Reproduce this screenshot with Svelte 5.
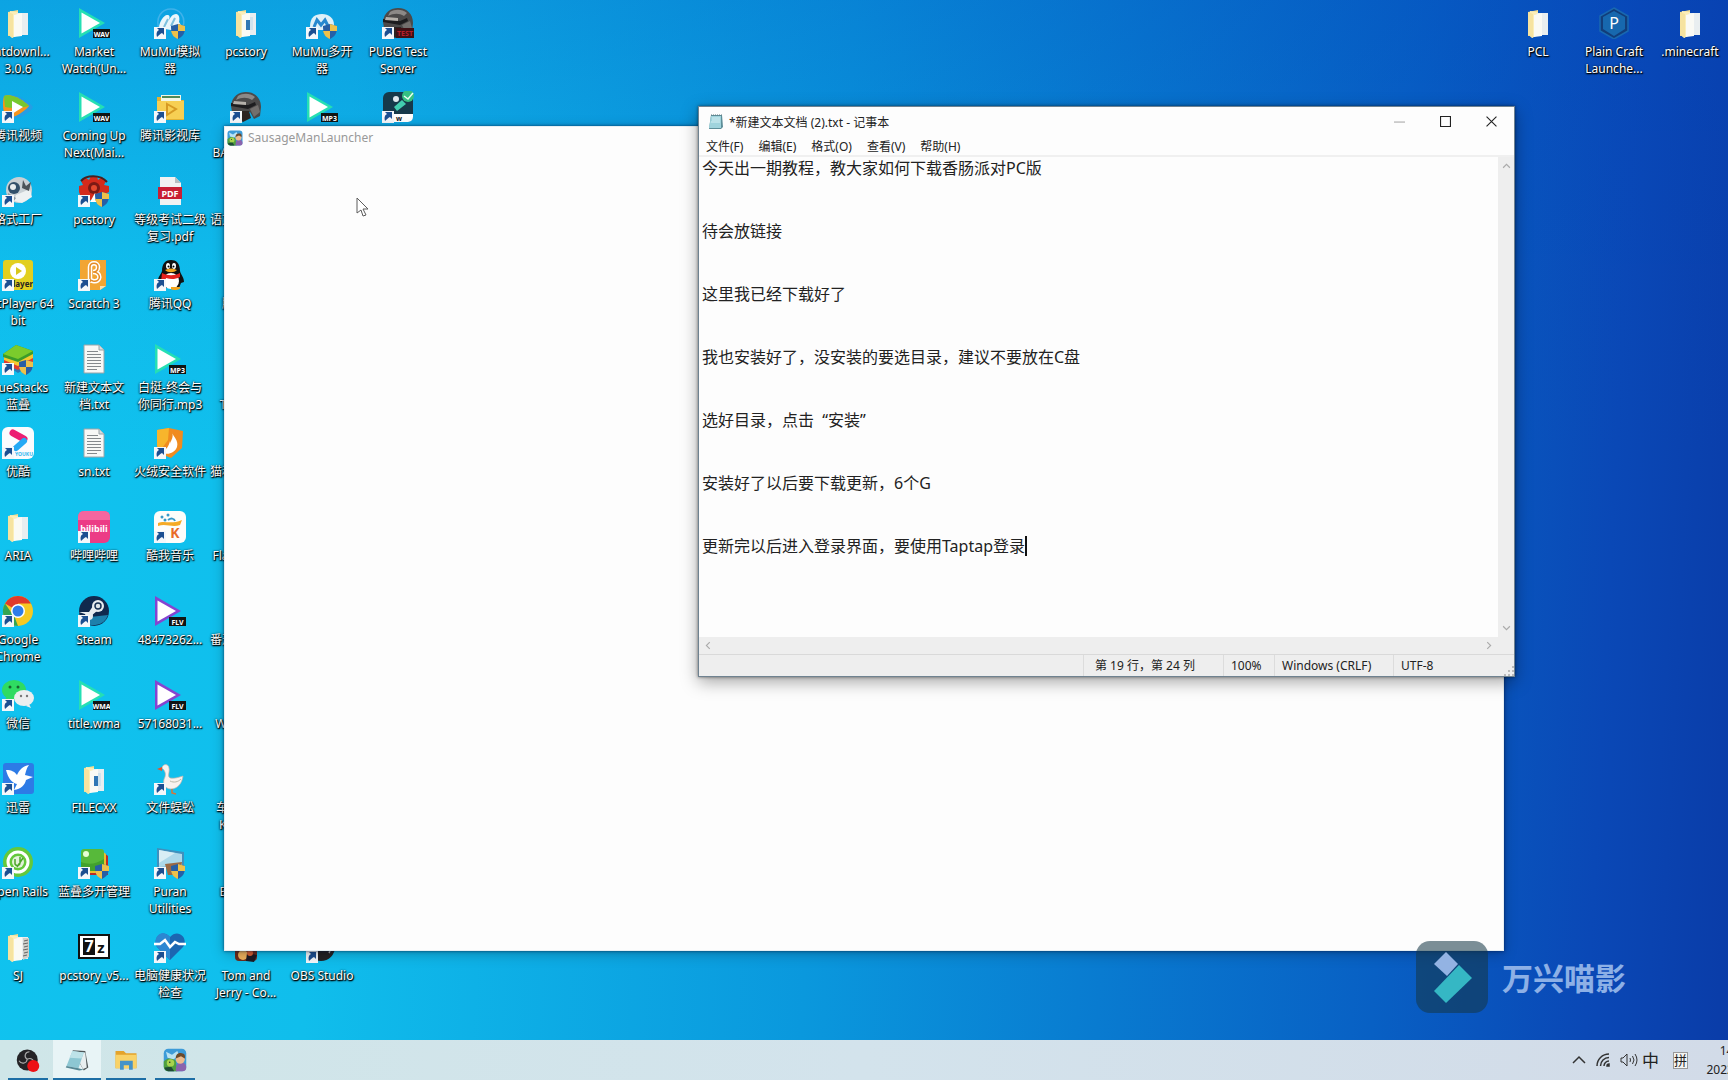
<script>
  import { onMount } from 'svelte';

  const shortcuts = [
    { col: 1, row: 1, icon: 'folder', label: 'Antdownl...\n3.0.6' },
    { col: 1, row: 2, icon: 'txvideo', label: '腾讯视频', link: true },
    { col: 1, row: 3, icon: 'factory', label: '格式工厂', link: true },
    { col: 1, row: 4, icon: 'potplayer', label: 'PotPlayer 64\nbit', link: true },
    { col: 1, row: 5, icon: 'bluestacks', label: 'BlueStacks\n蓝叠', link: true, shield: true },
    { col: 1, row: 6, icon: 'youku', label: '优酷', link: true },
    { col: 1, row: 7, icon: 'folder', label: 'ARIA' },
    { col: 1, row: 8, icon: 'chrome', label: 'Google\nChrome', link: true },
    { col: 1, row: 9, icon: 'wechat', label: '微信', link: true },
    { col: 1, row: 10, icon: 'xunlei', label: '迅雷', link: true },
    { col: 1, row: 11, icon: 'rails', label: 'Open Rails', link: true },
    { col: 1, row: 12, icon: 'folderfile', label: 'SJ' },

    { col: 2, row: 1, icon: 'media', tone: '#25dfb4', tag: 'WAV', label: 'Market\nWatch(Un...' },
    { col: 2, row: 2, icon: 'media', tone: '#25dfb4', tag: 'WAV', label: 'Coming Up\nNext(Mai...' },
    { col: 2, row: 3, icon: 'gear', label: 'pcstory', link: true, shield: true },
    { col: 2, row: 4, icon: 'scratch', label: 'Scratch 3', link: true },
    { col: 2, row: 5, icon: 'txt', label: '新建文本文\n档.txt' },
    { col: 2, row: 6, icon: 'txt', label: 'sn.txt' },
    { col: 2, row: 7, icon: 'bili', label: '哔哩哔哩', link: true },
    { col: 2, row: 8, icon: 'steam', label: 'Steam', link: true },
    { col: 2, row: 9, icon: 'media', tone: '#25dfb4', tag: 'WMA', label: 'title.wma' },
    { col: 2, row: 10, icon: 'folderblue', label: 'FILECXX' },
    { col: 2, row: 11, icon: 'greenbox', label: '蓝叠多开管理', link: true, shield: true },
    { col: 2, row: 12, icon: 'sevenzip', label: 'pcstory_v5...' },

    { col: 3, row: 1, icon: 'mumu', label: 'MuMu模拟\n器', link: true, shield: true },
    { col: 3, row: 2, icon: 'videofolder', label: '腾讯影视库', link: true },
    { col: 3, row: 3, icon: 'pdf', label: '等级考试二级\n复习.pdf' },
    { col: 3, row: 4, icon: 'qq', label: '腾讯QQ', link: true },
    { col: 3, row: 5, icon: 'media', tone: '#25dfb4', tag: 'MP3', label: '白挺-终会与\n你同行.mp3' },
    { col: 3, row: 6, icon: 'huorong', label: '火绒安全软件', link: true },
    { col: 3, row: 7, icon: 'kuwo', label: '酷我音乐', link: true },
    { col: 3, row: 8, icon: 'media', tone: '#8544d0', tag: 'FLV', label: '48473262...' },
    { col: 3, row: 9, icon: 'media', tone: '#8544d0', tag: 'FLV', label: '57168031...' },
    { col: 3, row: 10, icon: 'goose', label: '文件蜈蚣', link: true },
    { col: 3, row: 11, icon: 'puran', label: 'Puran\nUtilities', link: true, shield: true },
    { col: 3, row: 12, icon: 'heart', label: '电脑健康状况\n检查', link: true },

    { col: 4, row: 1, icon: 'folderblue', label: 'pcstory' },
    { col: 4, row: 2, icon: 'helmet', label: '\nBATTLEGR...', link: true },
    { col: 4, row: 3, icon: 'txt', label: '语文学习资料' },
    { col: 4, row: 4, icon: 'txt', label: '腾讯会议' },
    { col: 4, row: 5, icon: 'txt', label: '\nTeamTalk' },
    { col: 4, row: 6, icon: 'txt', label: '猫和老鼠手游' },
    { col: 4, row: 7, icon: 'txt', label: 'FlashCenter' },
    { col: 4, row: 8, icon: 'txt', label: '番茄小说阅读' },
    { col: 4, row: 9, icon: 'txt', label: 'Wallpaper..' },
    { col: 4, row: 10, icon: 'txt', label: '车机互联版\nKugou 22' },
    { col: 4, row: 11, icon: 'txt', label: 'EV Studio' },
    { col: 4, row: 12, icon: 'tom', label: 'Tom and\nJerry - Co...' },

    { col: 5, row: 1, icon: 'mumublue', label: 'MuMu多开\n器', link: true, shield: true },
    { col: 5, row: 2, icon: 'media', tone: '#25dfb4', tag: 'MP3', label: '' },
    { col: 5, row: 12, icon: 'obs', label: 'OBS Studio', link: true },

    { col: 6, row: 1, icon: 'helmettest', label: 'PUBG Test\nServer', link: true },
    { col: 6, row: 2, icon: 'filmora', label: '', link: true }
  ];

  const rightShortcuts = [
    { col: 1, row: 1, icon: 'folder', label: 'PCL' },
    { col: 2, row: 1, icon: 'pcl', label: 'Plain Craft\nLaunche...' },
    { col: 3, row: 1, icon: 'folder', label: '.minecraft' }
  ];

  const menus = ['文件(F)', '编辑(E)', '格式(O)', '查看(V)', '帮助(H)'];

  const tasks = [
    { icon: 'obsrec', name: 'OBS' },
    { icon: 'notepad', name: '记事本', active: true },
    { icon: 'explorer', name: '文件资源管理器' },
    { icon: 'sausage', name: 'SausageManLauncher' }
  ];

  const paragraphs = [
    '今天出一期教程，教大家如何下载香肠派对PC版',
    '待会放链接',
    '这里我已经下载好了',
    '我也安装好了，没安装的要选目录，建议不要放在C盘',
    '选好目录，点击  “安装”',
    '安装好了以后要下载更新，6个G',
    '更新完以后进入登录界面，要使用Taptap登录'
  ];
  const LINE = 21;

  let text = $state(paragraphs.join('\n\n\n'));
  let editor;
  let caretX = $state(0);
  let caretY = $derived((text.split('\n').length - 1) * LINE);

  function placeCaret() {
    const ctx = document.createElement('canvas').getContext('2d');
    ctx.font = getComputedStyle(editor).font;
    caretX = Math.round(ctx.measureText(text.split('\n').pop()).width);
  }

  onMount(placeCaret);
</script>

{#snippet folderBase()}
  <path d="M6 5l10-2v25l-10 1z" fill="#f3dc8d" />
  <path d="M8 4l8 1v23l-6 3-2-2z" fill="#fbeeb9" />
  <path d="M15 6h11v22H15z" fill="#e9eef0" />
  <path d="M12 8l8-2v23l-8 1z" fill="#fafaf5" />
  <path d="M6 5l5 2v24l-5-3z" fill="#f6e3a0" />
{/snippet}

{#snippet sausageArt()}
  <rect x="1" y="1" width="30" height="30" rx="6" fill="#3d9bd8" />
  <path d="M1 18c6-6 11-5 16-1l2 14H7a6 6 0 0 1-6-6z" fill="#4f9f3f" />
  <path d="M4 5l8 4 7-5 3 6-8 5-8-2z" fill="#b9e2f2" />
  <circle cx="10" cy="20" r="5" fill="#a8d34d" />
  <circle cx="9" cy="19" r="1" fill="#223" />
  <path d="M17 31c0-9 3-12 7-12 5 0 7 4 7 7a5 5 0 0 1-5 5z" fill="#8a63ad" />
  <circle cx="23" cy="15" r="6" fill="#edbb8e" />
  <path d="M17 14c0-6 4-8 8-7 4 0 5 4 4 7l-5-3z" fill="#6b4a2b" />
  <path d="M2 26l9-1 4 6H7a6 6 0 0 1-5-5z" fill="#1f4a35" />
{/snippet}

{#snippet helmetArt()}
  <path d="M1 15C2 5 9 1 16 1c9 0 15 6 15 15l-1 9-6 3-4-7H2z" fill="#4b4a4a" />
  <path d="M8 5c5-3 12-3 17 1l-3 3C17 6 12 6 6 9z" fill="#8c8987" />
  <path d="M1 12l17 2 7-3 1 3-8 4-17-3z" fill="#1d1d1f" />
  <path d="M4 10l12 1v3L3 13z" fill="#b4b0aa" />
  <path d="M6 20h13l2 7-8 4-7-5z" fill="#2c2421" />
  <path d="M20 18l8-4 2 7-6 5z" fill="#726f6d" />
{/snippet}

{#snippet glyph(name, tone, tag)}
  {#if name === 'folder'}
    {@render folderBase()}
  {:else if name === 'folderblue'}
    {@render folderBase()}
    <path d="M16 13h4v10h-4z" fill="#3177b5" />
    <path d="M20 10h3v13h-3z" fill="#cfe3ee" />
  {:else if name === 'folderfile'}
    {@render folderBase()}
    <path d="M21 7h6v19l-6 3z" fill="#cfcfca" />
    <path d="M22 10l4-1M21 13l5-1M22 16l4-1M21 19l5-1M22 22l4-1M21 25l4-1" stroke="#666" />
  {:else if name === 'media'}
    <path d="M1 1l26 15L1 31z" fill={tone} />
    <path d="M3.500 5.500L22 16 3.500 26.500z" fill="#fff" />
    <rect x="15" y="22" width="17" height="9" fill="#101414" />
    <text x="23.5" y="29.5" class="tag">{tag}</text>
  {:else if name === 'txt'}
    <path d="M6 2h15l5 5v23H6z" fill="#f8f8f6" stroke="#9aa4a8" />
    <path d="M21 2v5h5" fill="#d8dcde" stroke="#9aa4a8" />
    <path d="M9 8.500h11M9 11.500h14M9 14.500h14M9 17.500h14M9 20.500h14M9 23.500h14M9 26.500h10" stroke="#85898c" />
  {:else if name === 'mumu'}
    <path d="M5 22C1 10 8 2 17 2s15 8 12 18" fill="none" stroke="#3fb2ea" stroke-width="1.500" />
    <path d="M5 21c0-6 5-13 8-13s3 2 2 5c2-4 4-6 7-6s4 4 3 8l4 6-12 2z" fill="#eaf6fb" />
    <path d="M10 20l4-8M17 19l4-8" stroke="#7cc0de" stroke-width="2" />
  {:else if name === 'mumublue'}
    <path d="M4 20C4 10 9 7 16 7s12 4 12 11v5H4z" fill="#dff0f8" />
    <path d="M8 20l3-7 4 5 4-5 3 6" fill="none" stroke="#2788cf" stroke-width="3" />
  {:else if name === 'txvideo'}
    <path d="M3 5c8-4 24 4 28 11-3 7-18 14-26 12-3-5-4-16-2-23z" fill="#259ee4" />
    <path d="M2 5c7-3 19 4 25 10-5 6-16 13-23 12-3-6-4-15-2-22z" fill="#f7941d" />
    <path d="M2 5c7-3 19 4 25 10-7 2-16 3-24 1z" fill="#78c82d" />
    <path d="M10 10l11 6-11 7z" fill="#fff" />
  {:else if name === 'videofolder'}
    <path d="M3 6h10l3 3h14v20H3z" fill="#e3b233" />
    <path d="M7 4h20v6H7z" fill="#f3f6e6" /><path d="M8 5h18v2H8z" fill="#4f8a58" />
    <path d="M3 10h27v18H3z" fill="#f7cf53" />
    <path d="M13 13l9 5-9 6z" fill="none" stroke="#d79a23" stroke-width="2" />
  {:else if name === 'factory'}
    <circle cx="17" cy="15" r="13" fill="#c9d0d4" />
    <circle cx="12" cy="13" r="6" fill="#32506a" /><circle cx="11" cy="12" r="3" fill="#e9eef0" />
    <path d="M14 20l14-6 2 8-10 6-8-2z" fill="#eef1f2" />
    <path d="M21 5l3 6 5-4-2 9-7-3z" fill="#4b5358" />
    <path d="M6 18l8 5-3 4-6-3z" fill="#8b979e" />
  {:else if name === 'gear'}
    <path d="M13 1h6l1 4 4-3 4 4-2 4 5 1v6l-4 2-1 6H4L1 17v-6l4-1-2-4 4-4 4 3z" fill="#d42b1c" />
    <circle cx="16" cy="13" r="6" fill="#7c1a15" /><circle cx="16" cy="13" r="3" fill="#e5492e" />
    <path d="M12 27l5-9 4 9z" fill="#fff" />
    <path d="M3 6C8 0 22-1 29 7" stroke="#422" fill="none" stroke-width="2" />
  {:else if name === 'pdf'}
    <path d="M6 2h15l6 6v22H6z" fill="#f1f2f2" />
    <path d="M21 2v6h6z" fill="#b9bdc0" />
    <rect x="4" y="12" width="24" height="12" fill="#c81f34" />
    <text x="16" y="21.500" class="pdf">PDF</text>
  {:else if name === 'potplayer'}
    <rect x="1" y="1" width="30" height="30" rx="3" fill="#e2cf1f" />
    <circle cx="16" cy="12" r="8" fill="#fff" />
    <path d="M14 8l6 4-6 4z" fill="#d8c71b" />
    <text x="21" y="28" class="pot">layer</text>
  {:else if name === 'scratch'}
    <path d="M2 1h26v26l-6 4H2z" fill="#f2a533" /><path d="M22 31v-4h6z" fill="#fce0ac" />
    <path d="M12 23V8c0-5 8-5 8 0 0 3-2 5-5 5 9 0 8 11 0 9l-3-1" fill="none" stroke="#fff" stroke-width="4.500" />
    <path d="M12 23V8c0-5 8-5 8 0 0 3-2 5-5 5 9 0 8 11 0 9l-3-1" fill="none" stroke="#e58b25" stroke-width="1.500" />
  {:else if name === 'qq'}
    <path d="M4 22c0-5 3-6 4-10 0-8 4-11 9-11s9 3 9 11c1 4 4 6 4 11l-3 1-2 5H9l-3-6z" fill="#111" />
    <ellipse cx="17" cy="22" rx="8" ry="8" fill="#fff" />
    <ellipse cx="14" cy="7" rx="2" ry="3" fill="#fff" /><ellipse cx="20" cy="7" rx="2" ry="3" fill="#fff" />
    <circle cx="14.500" cy="7.500" r="1" /><circle cx="19.500" cy="7.500" r="1" />
    <path d="M11 11c4-2 8-2 12 0-3 3-9 3-12 0z" fill="#f3a51e" />
    <path d="M8 14c6 3 12 3 18 0v4c-6 3-10 2-14 1l-1 5-4-1z" fill="#e5221e" />
    <path d="M17 28h9c2 3-7 4-9 2z" fill="#f3a51e" />
  {:else if name === 'bluestacks'}
    <path d="M2 21l14-6 15 6-15 9z" fill="#2c79b7" />
    <path d="M2 17l14-6 15 4v4l-15 8-14-6z" fill="#e03d2f" />
    <path d="M2 14l14-6 15 3v4l-15 8-14-6z" fill="#f4c92f" />
    <path d="M1 11L14 2l17 6v3l-15 8-15-5z" fill="#3a9c2a" />
    <path d="M1 11L14 2l17 6-15 8z" fill="#7bcb2c" />
  {:else if name === 'youku'}
    <rect x="0" y="0" width="32" height="32" rx="6" fill="#fbfbfd" />
    <path d="M11 6l11 6" stroke="#ec1d72" stroke-width="7" stroke-linecap="round" />
    <path d="M22 14l-8 7" stroke="#24a9f5" stroke-width="6" stroke-linecap="round" />
    <text x="22" y="29" class="youku">YOUKU</text>
  {:else if name === 'chrome'}
    <circle cx="16" cy="16" r="15" fill="#f6c922" />
    <path d="M16 16L3 8.500A15 15 0 0 1 29 8.500H16z" fill="#df3a2c" />
    <path d="M3 8.500L13 23l3 8A15 15 0 0 1 3 8.500z" fill="#33a553" />
    <circle cx="16" cy="16" r="7" fill="#fff" /><circle cx="16" cy="16" r="5.500" fill="#2e7de9" />
  {:else if name === 'wechat'}
    <ellipse cx="12" cy="11" rx="12" ry="10" fill="#2fdb62" />
    <path d="M4 18l-1 6 6-3z" fill="#2fdb62" />
    <circle cx="8" cy="8" r="1.500" fill="#17642e" /><circle cx="16" cy="8" r="1.500" fill="#17642e" />
    <ellipse cx="22" cy="19" rx="10" ry="8" fill="#eceeef" /><path d="M27 25l2 4-5-2z" fill="#eceeef" />
    <circle cx="19" cy="17" r="1.200" fill="#777" /><circle cx="25" cy="17" r="1.200" fill="#777" />
  {:else if name === 'xunlei'}
    <rect x="1" y="0" width="31" height="31" rx="3" fill="#2d7be6" />
    <path d="M4 7c6 0 9 2 11 5 2-5 6-9 12-10-3 4-3 7-4 10l8 2-7 3c-1 5-5 9-12 10l3-6C10 20 6 15 4 7z" fill="#fff" />
  {:else if name === 'rails'}
    <circle cx="16" cy="15" r="15" fill="#64c83c" />
    <circle cx="16" cy="15" r="10" fill="none" stroke="#fff" stroke-width="3" />
    <circle cx="16" cy="15" r="6" fill="#e3f2da" />
    <path d="M13 12v5c2 3 5 1 5-1v-6M15 20l6-9" stroke="#4da52b" stroke-width="1.500" fill="none" />
  {:else if name === 'huorong'}
    <path d="M3 3l12-2 14 3-1 17-11 10C8 28 3 24 3 17z" fill="#f08b1f" />
    <path d="M3 3l12-2-1 12-8 11c-2-2-3-4-3-7z" fill="#f7b52c" />
    <path d="M18 5c1 5 7 8 5 15-2 6-9 8-14 6 5-2 7-5 7-9 1-4 4-7 2-12z" fill="#fff" />
    <path d="M8 25c4-2 7-6 8-11 2 6 0 11-5 13z" fill="#fff" />
  {:else if name === 'bili'}
    <rect x="0" y="0" width="32" height="32" rx="6" fill="#ec3c86" />
    <path d="M0 6q0-6 6-6h20q6 0 6 6v3H0z" fill="#f4669f" />
    <text x="16" y="21" class="bili">bilibili</text>
  {:else if name === 'steam'}
    <circle cx="16" cy="16" r="15" fill="#10294e" />
    <path d="M3 23a15 15 0 0 0 27-3z" fill="#1d80ac" />
    <circle cx="20" cy="11" r="6" fill="#e8ecef" /><circle cx="20" cy="11" r="3" fill="#dfe5e8" stroke="#173153" stroke-width="1.500" />
    <path d="M1 17l12 4 6-5-4-5-4 6z" fill="#e8ecef" /><circle cx="11" cy="21" r="4" fill="#e8ecef" />
  {:else if name === 'kuwo'}
    <rect x="0" y="0" width="32" height="32" rx="6" fill="#fdfdfa" />
    <circle cx="8" cy="6" r="1.500" fill="#3798c8" /><circle cx="14" cy="4" r="1.500" fill="#3798c8" /><circle cx="11" cy="9" r="1.500" fill="#3798c8" />
    <path d="M4 12c7-3 12 2 24-3l-2 5c-8 3-14-2-22 1z" fill="#f5aa25" />
    <path d="M14 9c3-2 6-2 7 1" stroke="#3798c8" stroke-width="2" fill="none" />
    <text x="21" y="27" class="kuwo">K</text>
  {:else if name === 'goose'}
    <path d="M8 5c1-5 7-4 7 0 1 4-2 8 1 10 5 1 9-1 13-2-1 8-6 13-12 13-7 0-9-7-6-12 1-4 0-6-3-9z" fill="#f8f2ee" stroke="#c6b4aa" stroke-width=".7" />
    <path d="M8 4L3 6l5 2z" fill="#e8532a" />
    <path d="M16 18c4 2 8 1 11-2" stroke="#bba" fill="none" />
    <path d="M18 26v4l4 1" stroke="#d87438" stroke-width="1.500" fill="none" />
  {:else if name === 'greenbox'}
    <path d="M7 6h19l4 3v19H9z" fill="#bd2b26" /><path d="M6 4h18l4 3v19H8z" fill="#e9c02e" />
    <rect x="3" y="2" width="23" height="22" rx="3" fill="#57b93a" />
    <circle cx="8" cy="7" r="3" fill="#e6ffd4" />
    <path d="M3 15c8 3 15 2 23-3v12H3z" fill="#42a22d" />
  {:else if name === 'puran'}
    <path d="M3 1l27 4v16L3 22z" fill="#3f90bd" /><path d="M5 3l23 4v12L5 20z" fill="#acd8ea" />
    <path d="M5 3l16 3L5 16z" fill="#d8eef5" />
    <path d="M11 17l17-2-2 13H14z" fill="#9c6a45" />
  {:else if name === 'sevenzip'}
    <rect x="1" y="4" width="30" height="23" fill="#fff" stroke="#111" stroke-width="2" />
    <rect x="5" y="7" width="12" height="17" fill="#111" />
    <text x="11" y="21" class="seven">7</text><text x="23" y="22" class="zee">z</text>
  {:else if name === 'heart'}
    <path d="M16 29L3 16C-2 7 8-3 16 6c8-9 19 1 13 10z" fill="#1c66b1" />
    <path d="M16 29L3 16C-1 9 4 2 9 2c5 1 6 3 7 4z" fill="#2c87d2" />
    <path d="M0 13h6l5-4 5 7 5-5 4 2h7" stroke="#fff" stroke-width="2.500" fill="none" />
  {:else if name === 'helmet'}
    {@render helmetArt()}
  {:else if name === 'helmettest'}
    {@render helmetArt()}
    <rect x="14" y="21" width="18" height="10" fill="#3f1115" />
    <text x="23" y="29" class="test">TEST</text>
  {:else if name === 'filmora'}
    <rect x="1" y="1" width="30" height="30" rx="6" fill="#16394a" />
    <circle cx="26" cy="5" r="6" fill="#35c083" /><path d="M22 5l4 3 5-6" stroke="#e8fff2" stroke-width="1.500" fill="none" />
    <circle cx="14" cy="8" r="3" fill="#dfe8ed" />
    <path d="M12 16l8-7 4 4-9 7z" fill="#42cdb0" />
    <path d="M11 23h20v3a5 5 0 0 1-5 5H11z" fill="#fff" />
    <text x="17" y="30" class="film">w</text>
  {:else if name === 'tom'}
    <rect x="5" y="3" width="22" height="27" rx="4" fill="#6c2d1d" />
    <circle cx="13" cy="24" r="5" fill="#efb35d" /><path d="M17 22l10 2-3 7-8-1z" fill="#1c1b25" />
    <circle cx="20" cy="22" r="3" fill="#da6132" />
  {:else if name === 'obs' || name === 'obsrec'}
    <circle cx="15" cy="16" r="14" fill="#242326" />
    <path d="M15 15C10 12 12 5 18 5M15 15c5-3 11 2 8 7M15 15c-1 6-8 7-11 2" stroke="#a9a9a9" stroke-width="1.500" fill="none" />
    {#if name === 'obsrec'}<circle cx="23" cy="24" r="8" fill="#ed1115" />{/if}
  {:else if name === 'pcl'}
    <path d="M16 1l14 8v15l-14 8-14-8V9z" fill="#123d79" stroke="#1868b1" stroke-width="1.500" />
    <path d="M16 4l11 6v12l-11 7-11-7V10z" fill="#1768ae" />
    <text x="16" y="22" class="pcl">P</text>
  {:else if name === 'notepad'}
    <path d="M10 3l17 1 4 22-6 4z" fill="#4d5557" />
    <path d="M12 5l15 1 2 20-5 2z" fill="#e8eff0" />
    <path d="M10 4l15 2-7 21L2 24z" fill="#8dc7d3" />
    <path d="M10 4l15 2-3 8-16-1z" fill="#bde2e8" />
    <path d="M2 24l16 3 7 2-6 1L1 26z" fill="#558794" />
  {:else if name === 'explorer'}
    <path d="M2 4h11l3 3h14v20H2z" fill="#e4a32b" /><path d="M2 9h28v18H2z" fill="#f9d267" />
    <path d="M8 29V17h17v12h-5v-6h-7v6z" fill="#4593c8" />
  {:else if name === 'sausage'}
    {@render sausageArt()}
  {/if}
{/snippet}

{#snippet desktopIcon(item)}
  <button class="shortcut" style="grid-area: {item.row} / {item.col}">
    <svg viewBox="0 0 32 32" aria-hidden="true">
      {@render glyph(item.icon, item.tone, item.tag)}
      {#if item.link}
        <rect x="0" y="20" width="12" height="12" fill="#f4f7fa" />
        <path d="M3 30c-1-4 0-6 2-7l-2-2h7v7l-2-2c-2 1-3 2-5 4z" fill="#1c4f91" />
      {/if}
      {#if item.shield}
        <path d="M24 17l7 2c0 6-1 10-7 13-6-3-7-7-7-13z" fill="#275fa5" />
        <path d="M24 17l7 2v5h-7zM17 24h7v8c-5-2-6-5-7-8z" fill="#edc14b" />
      {/if}
    </svg>
    <span>{item.label}</span>
  </button>
{/snippet}

<div class="screen">
  <main class="desktop">
    <div class="icons left">
      {#each shortcuts as item}{@render desktopIcon(item)}{/each}
    </div>
    <div class="icons right">
      {#each rightShortcuts as item}{@render desktopIcon(item)}{/each}
    </div>

    <section class="window launcher">
      <header>
        <svg viewBox="0 0 32 32" aria-hidden="true">{@render sausageArt()}</svg>
        <span>SausageManLauncher</span>
      </header>
    </section>

    <section class="window notepad">
      <header class="titlebar">
        <svg viewBox="0 0 16 16" aria-hidden="true">
          <path d="M3 1h11l1 12-2 2H1z" fill="#5d8e99" />
          <path d="M3 2h10v12H1z" fill="#9fd3dc" />
          <path d="M4 4h8M4 6h8M3 8h9" stroke="#d5eff3" />
          <path d="M3 1h11" stroke="#647d83" stroke-dasharray="1 1" />
        </svg>
        <span class="name">*新建文本文档 (2).txt - 记事本</span>
        <button class="min" aria-label="最小化"><svg viewBox="0 0 10 10"><path d="M0 5.500h10" /></svg></button>
        <button aria-label="最大化"><svg viewBox="0 0 10 10"><path d="M.5.5h9v9h-9z" /></svg></button>
        <button aria-label="关闭"><svg viewBox="0 0 10 10"><path d="M.5.5l9 9M9.500.5l-9 9" /></svg></button>
      </header>
      <nav>
        {#each menus as menu}<button>{menu}</button>{/each}
      </nav>
      <div class="body">
        <div class="paper">
          <textarea aria-label="文本编辑器" spellcheck="false" wrap="off" bind:this={editor} bind:value={text} oninput={placeCaret}></textarea>
          <i class="caret" style="left: {caretX}px; top: {caretY}px"></i>
        </div>
        <div class="vscroll">
          <button aria-label="向上滚动"><svg viewBox="0 0 8 8"><path d="M1 6l3-3 3 3" /></svg></button>
          <button aria-label="向下滚动"><svg viewBox="0 0 8 8"><path d="M1 2l3 3 3-3" /></svg></button>
        </div>
      </div>
      <div class="hscroll">
        <button aria-label="向左滚动"><svg viewBox="0 0 8 8"><path d="M6 1L3 4l3 3" /></svg></button>
        <button aria-label="向右滚动"><svg viewBox="0 0 8 8"><path d="M2 1l3 3-3 3" /></svg></button>
      </div>
      <footer>
        <span class="pos">第 19 行，第 24 列</span>
        <span class="zoom">100%</span>
        <span class="eol">Windows (CRLF)</span>
        <span class="enc">UTF-8</span>
        <svg class="grip" viewBox="0 0 10 10" aria-hidden="true"><path d="M8 0h2v2H8zM8 4h2v2H8zM8 8h2v2H8zM4 4h2v2H4zM4 8h2v2H4zM0 8h2v2H0z" /></svg>
      </footer>
    </section>

    <svg class="cursor" viewBox="0 0 14 20" aria-hidden="true">
      <path d="M1 1v15l4-3 2 6 3-1-3-6h5z" fill="#fff" stroke="#5c5c5c" />
    </svg>
  </main>

  <footer class="taskbar">
    {#each tasks as task}
      <button class:active={task.active} aria-label={task.name}>
        <svg viewBox="0 0 32 32" aria-hidden="true">{@render glyph(task.icon)}</svg>
      </button>
    {/each}
    <div class="tray">
      <svg class="up" viewBox="0 0 14 14" aria-hidden="true"><path d="M1 10l6-6 6 6" /></svg>
      <svg class="net" viewBox="0 0 14 14" aria-hidden="true">
        <path d="M1 13A12 12 0 0 1 13 1M4.500 13A8.500 8.500 0 0 1 13 4.500M8 13a5 5 0 0 1 5-5" />
        <path d="M11 13a2 2 0 0 1 2-2v2z" fill="#333" />
      </svg>
      <svg class="vol" viewBox="0 0 18 14" aria-hidden="true">
        <path d="M1 5h2l4-4v12L3 9H1zM10 5q1 2 0 4M12.500 3q3 4 0 8M15 1q4 6 0 12" />
      </svg>
      <span class="lang">中</span>
      <span class="ime">拼</span>
      <div class="clock"><span>14:30</span><span>2022/7/23</span></div>
    </div>
  </footer>

  <div class="watermark">
    <div class="badge">
      <svg viewBox="0 0 72 72" aria-hidden="true">
        <path d="M30 11l12 12-11 12-13-12z" fill="#93b3e3" />
        <path d="M43 24l13 13-26 25-12-12z" fill="#35b7c4" />
      </svg>
    </div>
    <span>万兴喵影</span>
  </div>
</div>

<style>
  :global(body) {
    margin: 0;
    overflow: hidden;
  }

  .screen {
    position: relative;
    display: flex;
    flex-direction: column;
    height: 100vh;
    overflow: hidden;
    font: 12px/17px 'Noto Sans', 'Noto Sans CJK SC', sans-serif;
    color: #222;
  }

  button {
    margin: 0;
    padding: 0;
    border: 0;
    background: none;
    font: inherit;
    color: inherit;
  }

  .desktop {
    position: relative;
    flex: 1;
    overflow: hidden;
    background:
      linear-gradient(180deg, rgba(0, 70, 190, 0.25), rgba(0, 70, 190, 0.05) 25%, transparent 45%),
      linear-gradient(93deg, #10c3ef 0%, #10beec 20%, #0a98dd 48%, #0860c4 80%, #0a48b6 92%, #0a3ca8 100%);
  }

  .icons {
    position: absolute;
    top: 0;
    display: grid;
    grid-auto-columns: 76px;
    grid-auto-rows: 84px;
  }

  .icons.left {
    left: -20px;
  }

  .icons.right {
    right: 0;
  }

  .shortcut {
    display: flex;
    flex-direction: column;
    align-items: center;
    gap: 4px;
    padding-top: 7px;
    color: #fff;
    white-space: pre;
    text-shadow: 1px 1px 1px #000, 0 1px 2px #000, 0 0 2px rgba(0, 0, 0, 0.7);
  }

  .shortcut svg {
    flex: none;
    width: 32px;
    height: 32px;
  }

  svg text {
    text-anchor: middle;
    font-family: 'Noto Sans', sans-serif;
    font-weight: 700;
    fill: #fff;
    text-shadow: none;
  }

  .tag { font-size: 7px; }
  .pdf { font-size: 9px; }
  svg .pot { font-size: 8px; fill: #222; }
  svg .youku { font-size: 5px; fill: #35b7ee; }
  .bili { font-size: 9px; }
  svg .kuwo { font-size: 14px; fill: #e86c28; }
  .seven { font-size: 16px; }
  svg .zee { font-size: 15px; fill: #111; }
  svg .test { font-size: 7px; fill: #b7202b; }
  svg .film { font-size: 7px; fill: #111; }
  svg .pcl { font-size: 16px; font-weight: 400; }

  .window {
    position: absolute;
    box-sizing: border-box;
    background: #fdfdfd;
  }

  .launcher {
    top: 126px;
    left: 224px;
    width: 1280px;
    height: 825px;
    border: 1px solid #e6eef2;
    box-shadow: 0 0 3px rgba(0, 20, 60, 0.7), 0 3px 12px rgba(0, 0, 0, 0.25);
  }

  .launcher header {
    display: flex;
    align-items: center;
    gap: 5px;
    padding: 2px;
    color: #999;
  }

  .launcher header svg {
    width: 16px;
    height: 16px;
  }

  .notepad {
    top: 106px;
    left: 698px;
    display: flex;
    flex-direction: column;
    width: 817px;
    height: 571px;
    border: 1px solid #6f8290;
    box-shadow: 0 0 3px rgba(0, 0, 0, 0.5), 0 5px 16px rgba(0, 0, 0, 0.35);
  }

  .titlebar {
    display: flex;
    align-items: center;
    height: 30px;
    padding-left: 9px;
  }

  .titlebar > svg {
    width: 16px;
    height: 16px;
    margin-right: 5px;
  }

  .name {
    flex: 1;
  }

  .titlebar button {
    width: 46px;
    height: 29px;
  }

  .titlebar button svg {
    width: 11px;
    height: 11px;
    fill: none;
    stroke: #222;
  }

  .titlebar .min svg {
    stroke: #aaa;
  }

  nav {
    display: flex;
    gap: 15px;
    height: 18px;
    padding-left: 7px;
    border-bottom: 2px solid #f0f0f0;
  }

  .body {
    flex: 1;
    display: flex;
    min-height: 0;
  }

  .paper {
    position: relative;
    flex: 1;
    margin: 1px 0 0 3px;
  }

  textarea {
    display: block;
    box-sizing: border-box;
    width: 100%;
    height: 100%;
    margin: 0;
    padding: 0;
    border: 0;
    outline: 0;
    resize: none;
    overflow: hidden;
    background: none;
    font: 16px/21px 'Noto Sans', 'Noto Sans CJK SC', sans-serif;
    color: #222;
    caret-color: transparent;
  }

  .caret {
    position: absolute;
    width: 2px;
    height: 20px;
    background: #111;
  }

  .vscroll,
  .hscroll {
    display: flex;
    justify-content: space-between;
    background: #eee;
  }

  .vscroll {
    flex-direction: column;
    width: 16px;
  }

  .hscroll {
    height: 17px;
    padding-right: 16px;
  }

  .vscroll button,
  .hscroll button {
    display: grid;
    place-items: center;
    width: 17px;
    height: 17px;
  }

  .vscroll svg,
  .hscroll svg {
    width: 9px;
    height: 9px;
    fill: none;
    stroke: #aaa;
  }

  .notepad footer {
    display: flex;
    justify-content: flex-end;
    height: 21px;
    border-top: 1px solid #d9d9d9;
    background: #eee;
  }

  .notepad footer span {
    box-sizing: border-box;
    padding: 2px 0 0 7px;
    border-left: 1px solid #dcdcdc;
    white-space: nowrap;
  }

  .notepad footer .pos {
    width: 140px;
    padding-left: 11px;
  }

  .zoom { width: 51px; }
  .eol { width: 119px; }
  .enc { width: 111px; }

  .grip {
    align-self: flex-end;
    width: 10px;
    height: 10px;
    fill: #bbb;
  }

  .cursor {
    position: absolute;
    top: 197px;
    left: 356px;
    width: 14px;
    height: 20px;
  }

  .taskbar {
    display: flex;
    gap: 1px;
    height: 40px;
    padding-left: 4px;
    background: linear-gradient(90deg, #cfe6e8, #d3e3ec 50%, #d2dbe8);
  }

  .taskbar button {
    position: relative;
    display: grid;
    place-items: center;
    width: 48px;
  }

  .taskbar button svg {
    width: 24px;
    height: 24px;
  }

  .taskbar button::after {
    content: '';
    position: absolute;
    right: 4px;
    bottom: 0;
    left: 4px;
    height: 2px;
    background: #1d6ea5;
  }

  .taskbar button.active {
    background: #e8f4f6;
  }

  .taskbar button.active::after {
    right: 0;
    left: 0;
  }

  .tray {
    display: flex;
    align-items: center;
    gap: 10px;
    margin-left: auto;
    margin-right: -38px;
  }

  .tray svg {
    width: 14px;
    height: 14px;
    fill: none;
    stroke: #333;
    stroke-width: 1.500;
  }

  .tray .vol {
    width: 18px;
    margin-right: -6px;
    stroke-width: 1;
  }

  .lang {
    font-size: 17px;
  }

  .ime {
    margin: 0 6px 0 4px;
    border: 1px solid #999;
    background: #f5f5f2;
    font-size: 13px;
    line-height: 15px;
  }

  .clock {
    display: flex;
    flex-direction: column;
    align-items: center;
    gap: 2px;
    width: 62px;
  }

  .watermark {
    position: absolute;
    right: 102px;
    bottom: 67px;
    display: flex;
    align-items: center;
    gap: 14px;
    font: 700 31px/48px 'Noto Sans CJK SC', sans-serif;
    color: #8db0e6;
  }

  .badge {
    width: 72px;
    height: 72px;
    border-radius: 14px;
    background: rgba(22, 56, 70, 0.56);
  }
</style>
